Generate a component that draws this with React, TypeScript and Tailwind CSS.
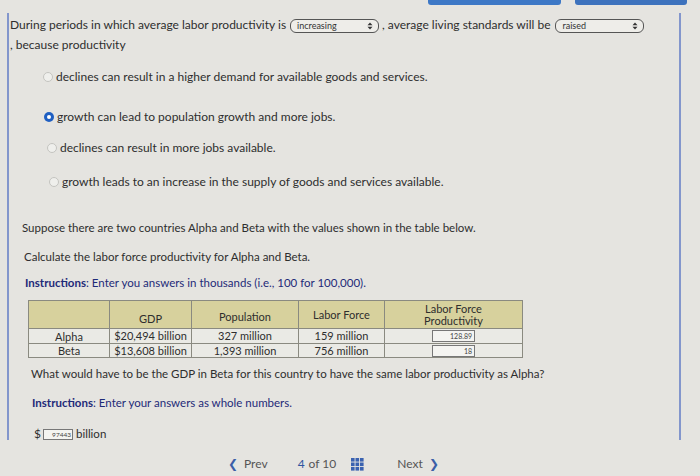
import React from 'react';

const FONT = { fontFamily: 'Lato, "Open Sans", "Liberation Sans", sans-serif' };

function SelectArrows() {
  return (
    <svg width="6" height="8" viewBox="0 0 6 8" className="shrink-0">
      <path d="M3 0.5 L5.5 3.2 H0.5 Z" fill="#333" />
      <path d="M3 7.5 L5.5 4.8 H0.5 Z" fill="#333" />
    </svg>
  );
}

function Select({ value, width }: { value: string; width: string }) {
  return (
    <span
      className={`inline-flex h-[14px] items-center justify-between rounded-[6px] border border-[#555] bg-[#eeede9] pl-[6px] pr-[5px] align-middle text-[9px] leading-none text-[#333] ${width}`}
    >
      <span>{value}</span>
      <SelectArrows />
    </span>
  );
}

function Radio({ checked }: { checked?: boolean }) {
  if (checked) {
    return (
      <span className="flex h-[10px] w-[10px] shrink-0 items-center justify-center rounded-full bg-[#1f5fc2]">
        <span className="h-[4px] w-[4px] rounded-full bg-white" />
      </span>
    );
  }
  return <span className="h-[10px] w-[10px] shrink-0 rounded-full border border-[#c4c4c0] bg-[#efefec]" />;
}

const options = [
  { text: 'declines can result in a higher demand for available goods and services.', ml: 'ml-[33px]', checked: false },
  { text: 'growth can lead to population growth and more jobs.', ml: 'ml-[34px]', checked: true },
  { text: 'declines can result in more jobs available.', ml: 'ml-[37px]', checked: false },
  { text: 'growth leads to an increase in the supply of goods and services available.', ml: 'ml-[39px]', checked: false },
];

const optionGaps = ['mt-[12px]', 'mt-[20px]', 'mt-[11px]', 'mt-[14px]'];

function ValueBox({ value }: { value: string }) {
  return (
    <span className="inline-block h-[12px] w-[43px] border border-[#777] bg-[#f4f4f1] pr-[2px] text-right align-top text-[7px] leading-[10px] text-[#444]">
      {value}
    </span>
  );
}

export default function App() {
  return (
    <div style={FONT} className="flex h-[476px] w-[700px] flex-col overflow-hidden bg-[#e5e4e0] text-[#2e2e2e]">
      {/* cut-off buttons at the top edge */}
      <div className="flex h-[5px] shrink-0">
        <div className="ml-[428px] w-[133px] rounded-b-[3px] bg-[#3d78c6]" />
        <div className="ml-[14px] w-[112px] rounded-b-[3px] bg-[#3d72bd]" />
      </div>

      <div className="ml-[7px] mt-[8px] h-[427px] w-[674px] shrink-0 border-l-2 border-r-2 border-[#8396cc] pl-[1px] text-[12px] leading-[20px]">
        <div className="pt-[2px]">
          <div className="flex items-center whitespace-nowrap">
            <span>During periods in which average labor productivity is</span>
            <span className="ml-[4px]">
              <Select value="increasing" width="w-[89px]" />
            </span>
            <span className="ml-[3px]">, average living standards will be</span>
            <span className="ml-[5px]">
              <Select value="raised" width="w-[89px]" />
            </span>
          </div>
          <div>, because productivity</div>
        </div>

        {options.map((o, i) => (
          <div key={i} className={`flex items-center gap-[3px] ${o.ml} ${optionGaps[i]}`}>
            <Radio checked={o.checked} />
            <span>{o.text}</span>
          </div>
        ))}

        <div className="text-[11.5px]">
          <div className="ml-[12px] mt-[26px]">Suppose there are two countries Alpha and Beta with the values shown in the table below.</div>
          <div className="ml-[14px] mt-[9px]">Calculate the labor force productivity for Alpha and Beta.</div>
          <div className="ml-[15px] mt-[6px] text-[#1e2a78]">
            <span className="font-bold">Instructions</span>: Enter you answers in thousands (i.e., 100 for 100,000).
          </div>

          <table className="ml-[18px] mt-[7px] w-[495px] border-collapse text-center text-[11px] leading-[12px]">
            <thead>
              <tr className="h-[28px] bg-[#d7d19d]">
                <th className="w-[81px] border border-[#8a8a80] font-normal" />
                <th className="w-[82px] border border-[#8a8a80] pt-[8px] font-normal">GDP</th>
                <th className="w-[107px] border border-[#8a8a80] pt-[4px] font-normal">Population</th>
                <th className="w-[86px] border border-[#8a8a80] font-normal">Labor Force</th>
                <th className="border border-[#8a8a80] font-normal leading-[12px]">
                  Labor Force
                  <br />
                  Productivity
                </th>
              </tr>
            </thead>
            <tbody className="bg-[#eaeae5]">
              <tr className="h-[14px]">
                <td className="border border-[#8a8a80] pt-[2px]">Alpha</td>
                <td className="border border-[#8a8a80]">$20,494 billion</td>
                <td className="border border-[#8a8a80]">327 million</td>
                <td className="border border-[#8a8a80]">159 million</td>
                <td className="border border-[#8a8a80] p-0">
                  <ValueBox value="128.89" />
                </td>
              </tr>
              <tr className="h-[14px]">
                <td className="border border-[#8a8a80]">Beta</td>
                <td className="border border-[#8a8a80]">$13,608 billion</td>
                <td className="border border-[#8a8a80]">1,393 million</td>
                <td className="border border-[#8a8a80]">756 million</td>
                <td className="border border-[#8a8a80] p-0">
                  <ValueBox value="18" />
                </td>
              </tr>
            </tbody>
          </table>

          <div className="ml-[21px] mt-[6px]">
            What would have to be the GDP in Beta for this country to have the same labor productivity as Alpha?
          </div>
          <div className="ml-[22px] mt-[9px] text-[#1e2a78]">
            <span className="font-bold">Instructions</span>: Enter your answers as whole numbers.
          </div>
          <div className="ml-[24px] mt-[11px] flex items-center">
            <span className="text-[12px]">$</span>
            <span className="ml-[2px] inline-block h-[11px] w-[30px] border border-[#777] bg-[#f4f4f1] pr-[1px] text-right text-[6.5px] leading-[9px] text-[#444]">
              97443
            </span>
            <span className="ml-[3px]">billion</span>
          </div>
        </div>
      </div>

      {/* bottom navigation */}
      <div className="mt-[15px] flex items-center text-[12px] text-[#555]">
        <div className="ml-[228px] flex items-center gap-[6px]">
          <span className="text-[#3c5fa8]">&#10094;</span>
          <span>Prev</span>
        </div>
        <div className="ml-[30px] flex items-center">
          <span className="text-[#2f55a0]">4</span>
          <span className="ml-[4px]">of 10</span>
        </div>
        <svg width="13" height="13" viewBox="0 0 13 13" className="ml-[15px]">
          {[0, 1, 2].map((r) =>
            [0, 1, 2].map((c) => (
              <rect key={`${r}-${c}`} x={c * 4.5} y={r * 4.5} width="3.6" height="3.6" fill="#3a62b0" />
            ))
          )}
        </svg>
        <div className="ml-[33px] flex items-center gap-[6px]">
          <span>Next</span>
          <span className="text-[#3c5fa8]">&#10095;</span>
        </div>
      </div>
    </div>
  );
}
